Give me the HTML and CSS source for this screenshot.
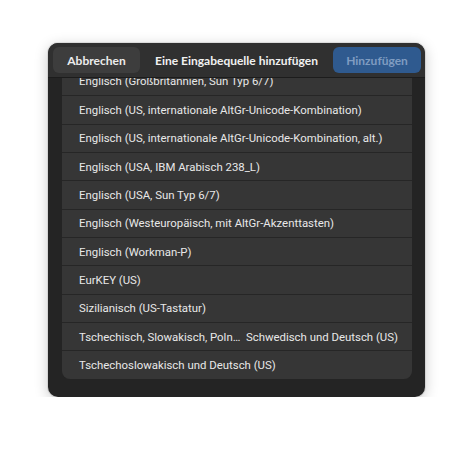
FILE: index.html
```html
<!DOCTYPE html>
<html lang="de">
<head>
<meta charset="utf-8">
<link rel="stylesheet" href="styles.css">
</head>
<body>
<div class="dialog">
  <div class="header">
    <button class="btn btn-cancel">Abbrechen</button>
    <div class="title">Eine Eingabequelle hinzufügen</div>
    <button class="btn btn-add">Hinzufügen</button>
  </div>
  <div class="content">
    <ul class="list">
      <li class="row">Englisch (Großbritannien, Sun Typ 6/7)</li>
      <li class="row">Englisch (US, internationale AltGr-Unicode-Kombination)</li>
      <li class="row">Englisch (US, internationale AltGr-Unicode-Kombination, alt.)</li>
      <li class="row">Englisch (USA, IBM Arabisch 238_L)</li>
      <li class="row">Englisch (USA, Sun Typ 6/7)</li>
      <li class="row">Englisch (Westeuropäisch, mit AltGr-Akzenttasten)</li>
      <li class="row">Englisch (Workman-P)</li>
      <li class="row">EurKEY (US)</li>
      <li class="row">Sizilianisch (US-Tastatur)</li>
      <li class="row">Tschechisch, Slowakisch, Poln…&nbsp; Schwedisch und Deutsch (US)</li>
      <li class="row">Tschechoslowakisch und Deutsch (US)</li>
    </ul>
  </div>
</div>
</body>
</html>
```

FILE: styles.css
```css
* { box-sizing: border-box; }
html, body { margin: 0; background: #ffffff; }
body {
  padding: 43px 0 0 48px;
  font-family: Lato, "Noto Sans", sans-serif;
  font-size: 11.5px;
}
.dialog {
  width: 377px;
  height: 354px;
  background: #242424;
  border-radius: 10px;
  overflow: hidden;
  display: flex;
  flex-direction: column;
  box-shadow: 0 3px 14px rgba(0,0,0,0.22), 0 0 0 1px rgba(0,0,0,0.08);
}
.header {
  height: 35px;
  flex: none;
  background: #303030;
  border-bottom: 1px solid #1c1c1c;
  display: flex;
  align-items: center;
  justify-content: space-between;
  padding: 0 4px 0 5px;
  position: relative;
  z-index: 1;
}
.btn {
  font-family: inherit;
  font-size: 12px;
  font-weight: 700;
  border: none;
  border-radius: 6px;
  height: 26px;
  padding: 0;
}
.btn-cancel { width: 87px; background: #3d3d3d; color: #ececec; }
.btn-add { width: 88px; background: #2f5a8f; color: #7f9cc1; }
.title { color: #f0f0f0; font-weight: 700; font-size: 12px; }
.content {
  flex: 1;
  overflow: hidden;
  padding: 0 13px 0 14px;
}
.list {
  list-style: none;
  margin: -11px 0 0 0;
  padding: 0;
  background: #363636;
  border-radius: 8px;
  overflow: hidden;
}
.row {
  height: 28.33px;
  display: flex;
  align-items: center;
  padding-left: 17px;
  color: #e8e8e8;
  font-family: Roboto, "Noto Sans", sans-serif;
  font-size: 11.4px;
  border-top: 1px solid #262626;
  white-space: nowrap;
}
.row:first-child { border-top: none; }
```
